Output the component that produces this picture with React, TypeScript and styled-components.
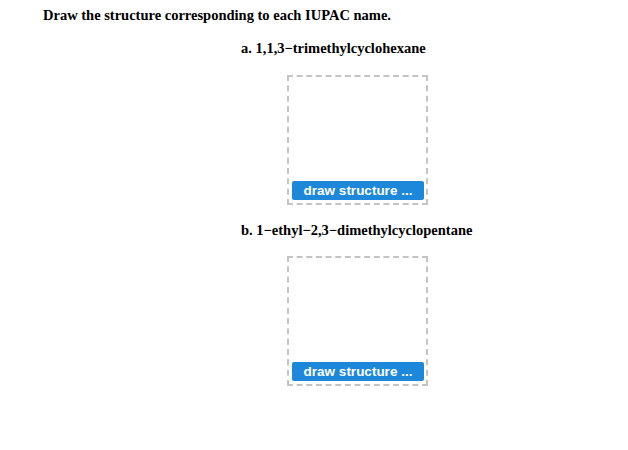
import React from "react";
import styled, { createGlobalStyle } from "styled-components";

const Global = createGlobalStyle`
  html, body { margin: 0; padding: 0; background: #fff; }
  body { font-family: "Liberation Serif", "Times New Roman", serif; color: #000; }
`;

const Page = styled.div`
  padding: 7px 0 0 43px;
`;

const Title = styled.div`
  font-weight: bold;
  font-size: 14.5px;
  line-height: 16px;
`;

const Question = styled.div<{ $top: number }>`
  margin-top: ${(p) => p.$top}px;
  margin-left: 198px;
`;

const Label = styled.div`
  font-weight: bold;
  font-size: 14.5px;
  line-height: 16px;
`;

const Canvas = styled.div<{ $gap: number }>`
  box-sizing: border-box;
  width: 141px;
  height: 130px;
  margin: ${(p) => p.$gap}px 0 0 46px;
  border: 2px dashed #c4c4c4;
  display: flex;
  flex-direction: column;
  justify-content: flex-end;
  padding: 0 2px 3px 3px;
`;

const DrawButton = styled.button`
  height: 19px;
  border: none;
  border-radius: 2px;
  background: #1d87d9;
  color: #fff;
  font-family: "Liberation Sans", Arial, sans-serif;
  font-weight: bold;
  font-size: 13.5px;
  padding: 0;
  cursor: pointer;
`;

const items = [
  { label: "a. 1,1,3\u2212trimethylcyclohexane", top: 17, gap: 19 },
  { label: "b. 1\u2212ethyl\u22122,3\u2212dimethylcyclopentane", top: 17, gap: 18 },
];

export default function App() {
  return (
    <>
      <Global />
      <Page>
        <Title>Draw the structure corresponding to each IUPAC name.</Title>
        {items.map((it) => (
          <Question key={it.label} $top={it.top}>
            <Label>{it.label}</Label>
            <Canvas $gap={it.gap}>
              <DrawButton>draw structure ...</DrawButton>
            </Canvas>
          </Question>
        ))}
      </Page>
    </>
  );
}
